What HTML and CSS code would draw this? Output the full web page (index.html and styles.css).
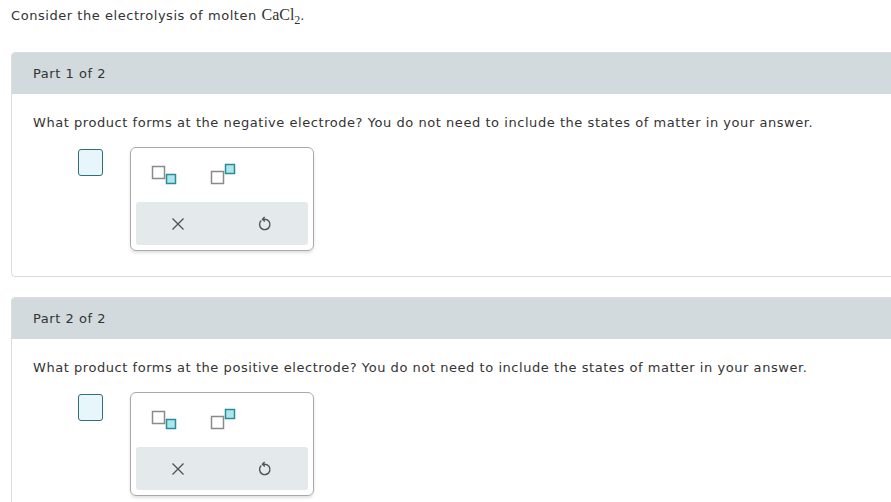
FILE: index.html
```html
<!DOCTYPE html>
<html>
<head>
<meta charset="utf-8">
<link rel="stylesheet" href="styles.css">
</head>
<body>
<p class="intro">Consider the electrolysis of molten <span class="chem">CaCl<sub>2</sub></span>.</p>

<section class="card">
  <div class="card-head">Part 1 of 2</div>
  <div class="card-body">
    <p class="question">What product forms at the negative electrode? You do not need to include the states of matter in your answer.</p>
    <div class="answer-row">
      <div class="answer-box"></div>
      <div class="palette">
        <div class="tools">
          <svg class="tool" width="28" height="24" viewBox="0 0 28 24"><rect x="2.5" y="3.5" width="12" height="12" fill="#fff" stroke="#8a8a8a" stroke-width="1.5"/><rect x="16.5" y="11.5" width="9" height="9" fill="#aee6ee" stroke="#2b8b99" stroke-width="1.5"/></svg>
          <svg class="tool" width="28" height="24" viewBox="0 0 28 24"><rect x="2.5" y="8.5" width="12" height="12" fill="#fff" stroke="#8a8a8a" stroke-width="1.5"/><rect x="16.5" y="1.5" width="9" height="9" fill="#aee6ee" stroke="#2b8b99" stroke-width="1.5"/></svg>
        </div>
        <div class="actions">
          <svg width="14" height="14" viewBox="0 0 14 14"><path d="M1.5 1.5 L12.5 12.5 M12.5 1.5 L1.5 12.5" stroke="#4a5458" stroke-width="1.3" fill="none"/></svg>
          <svg width="16" height="16" viewBox="0 0 16 16"><path d="M4.2 4.6 A5.2 5.2 0 1 0 8 3.2 L6.2 3.2" stroke="#4a5458" stroke-width="1.4" fill="none"/><path d="M7.6 0.9 L5.5 3.2 L7.8 5.4" stroke="#4a5458" stroke-width="1.4" fill="none"/></svg>
        </div>
      </div>
    </div>
  </div>
</section>

<section class="card">
  <div class="card-head">Part 2 of 2</div>
  <div class="card-body">
    <p class="question">What product forms at the positive electrode? You do not need to include the states of matter in your answer.</p>
    <div class="answer-row">
      <div class="answer-box"></div>
      <div class="palette">
        <div class="tools">
          <svg class="tool" width="28" height="24" viewBox="0 0 28 24"><rect x="2.5" y="3.5" width="12" height="12" fill="#fff" stroke="#8a8a8a" stroke-width="1.5"/><rect x="16.5" y="11.5" width="9" height="9" fill="#aee6ee" stroke="#2b8b99" stroke-width="1.5"/></svg>
          <svg class="tool" width="28" height="24" viewBox="0 0 28 24"><rect x="2.5" y="8.5" width="12" height="12" fill="#fff" stroke="#8a8a8a" stroke-width="1.5"/><rect x="16.5" y="1.5" width="9" height="9" fill="#aee6ee" stroke="#2b8b99" stroke-width="1.5"/></svg>
        </div>
        <div class="actions">
          <svg width="14" height="14" viewBox="0 0 14 14"><path d="M1.5 1.5 L12.5 12.5 M12.5 1.5 L1.5 12.5" stroke="#4a5458" stroke-width="1.3" fill="none"/></svg>
          <svg width="16" height="16" viewBox="0 0 16 16"><path d="M4.2 4.6 A5.2 5.2 0 1 0 8 3.2 L6.2 3.2" stroke="#4a5458" stroke-width="1.4" fill="none"/><path d="M7.6 0.9 L5.5 3.2 L7.8 5.4" stroke="#4a5458" stroke-width="1.4" fill="none"/></svg>
        </div>
      </div>
    </div>
  </div>
</section>
</body>
</html>
```

FILE: styles.css
```css
html, body {
  margin: 0;
  padding: 0;
  background: #fff;
  overflow: hidden;
}
body {
  font-family: "DejaVu Sans", Verdana, sans-serif;
  font-size: 13px;
  letter-spacing: 0.55px;
  color: #333;
  width: 891px;
  height: 502px;
}
.intro {
  margin: 0;
  padding: 6px 0 0 11px;
  height: 52px;
  box-sizing: border-box;
  line-height: 18px;
}
.chem {
  font-family: "Liberation Serif", "Times New Roman", serif;
  font-size: 16px;
  letter-spacing: 0;
}
.chem sub {
  font-size: 12px;
  vertical-align: -4px;
  line-height: 0;
}
.card {
  margin: 0 -10px 20px 11px;
  border: 1px solid #dcdcdc;
  border-radius: 4px;
  overflow: hidden;
}
.card-head {
  background: #d2dadd;
  height: 41px;
  line-height: 41px;
  padding-left: 21px;
}
.card-body {
  padding: 19px 0 25px 21px;
}
.question {
  margin: 0;
  line-height: 20px;
}
.answer-row {
  display: flex;
  align-items: flex-start;
  margin-top: 14px;
}
.answer-box {
  width: 23px;
  height: 25px;
  margin: 2px 0 0 45px;
  border: 1px solid #2f6f78;
  border-radius: 3px;
  background: #e6f6fa;
}
.palette {
  margin-left: 27px;
  width: 172px;
  height: 97px;
  border: 1px solid #a9a9a9;
  border-radius: 6px;
  box-shadow: 0 2px 3px rgba(0,0,0,0.12);
  padding: 0 5px 5px;
  display: flex;
  flex-direction: column;
}
.tools {
  height: 54px;
  flex: none;
  display: flex;
  align-items: center;
  gap: 31px;
  padding-left: 14px;
}
.actions {
  flex: 1;
  background: #e4e9eb;
  border-radius: 3px;
  display: flex;
  align-items: center;
  gap: 72px;
  padding-left: 35px;
}
```
